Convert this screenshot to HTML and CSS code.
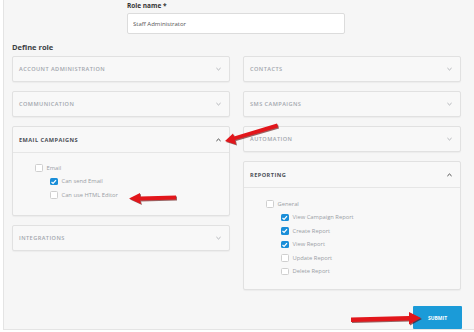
FILE: index.html
```html
<!DOCTYPE html>
<html lang="en">
<head>
  <meta charset="UTF-8" />
  <title>Define role</title>
  <link rel="stylesheet" href="styles.css">
</head>
<body>
  <div class="page">

    <div class="role-name">
      <label for="roleName">Role name *</label>
      <input type="text" id="roleName" value="Staff Administrator" />
    </div>

    <h2>Define role</h2>

    <div class="columns">
      <div class="column">
        <div class="panel">
          <div class="panel-head"><span>Account Administration</span><svg class="chev" viewBox="0 0 6 4"><polyline points="0.5,0.8 3,3.2 5.5,0.8"/></svg></div>
        </div>
        <div class="panel">
          <div class="panel-head"><span>Communication</span><svg class="chev" viewBox="0 0 6 4"><polyline points="0.5,0.8 3,3.2 5.5,0.8"/></svg></div>
        </div>
        <div class="panel open">
          <div class="panel-head"><span>Email Campaigns</span><svg class="chev" viewBox="0 0 6 4"><polyline points="0.5,3.2 3,0.8 5.5,3.2"/></svg></div>
          <div class="panel-body">
            <div class="check"><i class="box"></i>Email</div>
            <div class="check sub"><i class="box on"><svg viewBox="0 0 8 8"><polyline points="1.6,4.2 3.3,5.8 6.4,2.2"/></svg></i>Can send Email</div>
            <div class="check sub"><i class="box"></i>Can use HTML Editor</div>
          </div>
        </div>
        <div class="panel">
          <div class="panel-head"><span>Integrations</span><svg class="chev" viewBox="0 0 6 4"><polyline points="0.5,0.8 3,3.2 5.5,0.8"/></svg></div>
        </div>
      </div>

      <div class="column">
        <div class="panel">
          <div class="panel-head"><span>Contacts</span><svg class="chev" viewBox="0 0 6 4"><polyline points="0.5,0.8 3,3.2 5.5,0.8"/></svg></div>
        </div>
        <div class="panel">
          <div class="panel-head"><span>SMS Campaigns</span><svg class="chev" viewBox="0 0 6 4"><polyline points="0.5,0.8 3,3.2 5.5,0.8"/></svg></div>
        </div>
        <div class="panel">
          <div class="panel-head"><span>Automation</span><svg class="chev" viewBox="0 0 6 4"><polyline points="0.5,0.8 3,3.2 5.5,0.8"/></svg></div>
        </div>
        <div class="panel open">
          <div class="panel-head"><span>Reporting</span><svg class="chev" viewBox="0 0 6 4"><polyline points="0.5,3.2 3,0.8 5.5,3.2"/></svg></div>
          <div class="panel-body report">
            <div class="check"><i class="box"></i>General</div>
            <div class="check sub"><i class="box on"><svg viewBox="0 0 8 8"><polyline points="1.6,4.2 3.3,5.8 6.4,2.2"/></svg></i>View Campaign Report</div>
            <div class="check sub"><i class="box on"><svg viewBox="0 0 8 8"><polyline points="1.6,4.2 3.3,5.8 6.4,2.2"/></svg></i>Create Report</div>
            <div class="check sub"><i class="box on"><svg viewBox="0 0 8 8"><polyline points="1.6,4.2 3.3,5.8 6.4,2.2"/></svg></i>View Report</div>
            <div class="check sub"><i class="box"></i>Update Report</div>
            <div class="check sub"><i class="box"></i>Delete Report</div>
          </div>
        </div>
      </div>
    </div>

    <div class="actions">
      <button type="submit">Submit</button>
    </div>

    <!-- annotation arrows drawn over the screenshot -->
    <svg class="arrows" viewBox="0 0 474 332">
      <g fill="#e2161b">
        <polygon points="276,123.5 277,127.5 234,140 235,144.5 224,141 232,133.5 233,136.5"/>
        <polygon points="175,195.5 175,199.5 139,200.5 140,204 128,198.5 139,193 139,196.5"/>
        <polygon points="350,317.5 350,322 408,320.5 408,324.5 420,318 408,312 408,316"/>
      </g>
    </svg>
  </div>
</body>
</html>
```

FILE: styles.css
```css
* {
  box-sizing: border-box;
}

body {
  margin: 0;
  background: #fff;
  font-family: "Open Sans", "Noto Sans", Arial, sans-serif;
}

.page {
  position: relative;
  margin-left: 3px;
  height: 330px;
  padding: 2px 13px 0 8px;
  background: #f6f6f6;
  border-left: 1px solid #e4e4e4;
  border-bottom: 1px solid #e4e4e4;
}

.role-name {
  margin-left: 115px;
  width: 218px;
}

.role-name label {
  display: block;
  font-size: 6.5px;
  font-weight: 700;
  color: #333;
  line-height: 8px;
  margin-bottom: 3px;
}

.role-name input {
  display: block;
  width: 100%;
  height: 21px;
  padding: 0 5px;
  border: 1px solid #dcdcdc;
  border-radius: 2px;
  background: #fff;
  font-family: inherit;
  font-size: 6px;
  color: #555;
}

h2 {
  margin: 8px 0 4px;
  font-size: 7.5px;
  line-height: 10px;
  font-weight: 700;
  color: #3c3f44;
}

.columns {
  display: grid;
  grid-template-columns: 218px 1fr;
  gap: 13px;
}

.column {
  display: flex;
  flex-direction: column;
  gap: 9px;
}

.panel {
  background: #f8f8f8;
  border: 1px solid #e1e1e1;
  border-radius: 2px;
  box-shadow: 0 1px 1px rgba(0,0,0,0.04);
}

.panel-head {
  height: 24px;
  display: flex;
  align-items: center;
  justify-content: space-between;
  padding: 0 8px 0 6px;
  font-size: 5.6px;
  font-weight: 600;
  letter-spacing: 0.45px;
  text-transform: uppercase;
  color: #a2a6ad;
}

.chev {
  width: 5px;
  height: 4px;
  fill: none;
  stroke: #9a9da3;
  stroke-width: 0.9;
}

.panel.open .panel-head {
  height: 26px;
  font-weight: 700;
  color: #4b4f56;
  border-bottom: 1px solid #e6e6e6;
}

.panel.open .chev {
  stroke: #444;
  stroke-width: 1.2;
}

.panel-body {
  padding: 8px 0 13px 22px;
}

.panel-body.report {
  padding: 9px 0 11px 22px;
}

.check {
  display: flex;
  align-items: center;
  height: 13.5px;
  font-size: 5.8px;
  color: #9a9ea5;
}

.check.sub {
  padding-left: 15px;
}

.box {
  width: 7.5px;
  height: 7.5px;
  margin-right: 4px;
  border: 1px solid #cfcfcf;
  border-radius: 1.5px;
  background: #fff;
  flex: none;
}

.box.on {
  border: none;
  background: #1a8ed8;
}

.box svg {
  display: block;
  width: 100%;
  height: 100%;
  fill: none;
  stroke: #fff;
  stroke-width: 1.3;
}

.actions {
  display: flex;
  justify-content: flex-end;
  margin-top: 16px;
  margin-right: -1px;
}

button {
  width: 49px;
  height: 23px;
  border: none;
  border-radius: 1px;
  background: #1b9bd8;
  color: #fff;
  font-family: inherit;
  font-size: 5px;
  font-weight: 700;
  text-transform: uppercase;
  cursor: pointer;
}

.arrows {
  position: absolute;
  left: -3px;
  top: 0;
  width: 474px;
  height: 332px;
  pointer-events: none;
  filter: drop-shadow(1px 1px 0.6px rgba(90,0,0,0.6));
}
```
